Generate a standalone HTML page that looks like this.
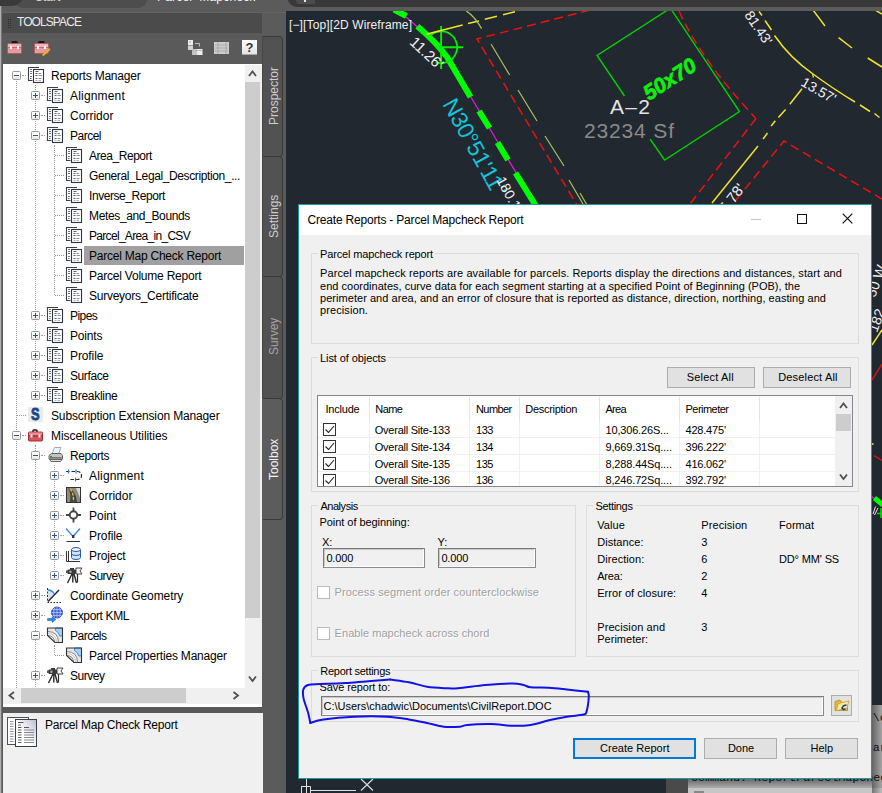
<!DOCTYPE html>
<html lang="en"><head><meta charset="utf-8"><title>Create Reports - Parcel Mapcheck Report</title>
<style>

html,body{margin:0;padding:0;}
body{width:882px;height:793px;overflow:hidden;background:#595959;font-family:"Liberation Sans",sans-serif;}
#root{position:relative;width:882px;height:793px;overflow:hidden;background:#595959;}
.a{position:absolute;}
.tx{position:absolute;white-space:nowrap;transform:translateY(-50%);line-height:1;}
.tr{font-size:12px;color:#000;}
.dl{font-size:11px;color:#000;}
.dis{color:#a0a0a0;}
.vd{position:absolute;width:0;border-left:1px dotted #9a9a9a;}
.hd{position:absolute;height:0;border-top:1px dotted #9a9a9a;}
.ex{position:absolute;width:7px;height:7px;border:1px solid #989898;border-radius:1.5px;background:linear-gradient(#fff 40%,#e4e4e4);}
.ex i{position:absolute;left:1px;top:3px;width:5px;height:1px;background:#33508e;}
.ex b{position:absolute;left:3px;top:1px;width:1px;height:5px;background:#33508e;}
.gb{position:absolute;border:1px solid #dcdcdc;box-sizing:border-box;}
.lg{background:#f0f0f0;padding:0 2px;}
.btn{position:absolute;box-sizing:border-box;border:1px solid #adadad;background:#e1e1e1;font-size:11px;color:#000;text-align:center;}
.cb{position:absolute;width:11px;height:11px;border:1px solid #333;background:#fff;}
.vt{position:absolute;font-size:12px;color:#d8d8d8;white-space:nowrap;transform-origin:0 0;transform:rotate(-90deg);line-height:1;}

</style></head>
<body>
<div id="root">
<div class="a" style="left:0;top:0;width:1px;height:793px;background:#b0b0b0"></div>
<div class="a" style="left:1px;top:0;width:1px;height:793px;background:#1e98a0"></div>
<div class="a" style="left:2px;top:0;width:880px;height:13px;background:#5b5b5b"></div>
<div class="a" style="left:2px;top:12px;width:284px;height:1px;background:#636363"></div>
<div class="a" style="left:14px;top:-20px;width:133px;height:28px;background:#4d4d4d;border-radius:0 0 9px 9px"></div>
<div class="a" style="left:-20px;top:-20px;width:43px;height:26px;background:#3a3a3a;border-radius:0 0 11px 0"></div>
<div class="a" style="left:287px;top:-20px;width:620px;height:27px;background:#393939;border-radius:0 0 0 11px"></div>
<div class="a" style="left:296px;top:-10px;width:19px;height:13.500px;background:#4c4c4c;border-radius:0 0 0 4px"></div>
<div class="a" style="left:304px;top:0;width:2px;height:1.500px;background:#e8e8e8"></div>
<span class="a" style="left:35px;top:-9px;font-size:12px;color:#d8d8d8;line-height:1">Start</span>
<span class="a" style="left:157px;top:-9px;font-size:12px;color:#f4f4f4;line-height:1;letter-spacing:.2px">Parcel&nbsp; Mapcheck*</span>
<div class="a" style="left:2px;top:13px;width:261px;height:20px;background:#4b4b4b;border-radius:3px 3px 0 0"></div>
<div class="a" style="left:8px;top:19px;width:1px;height:9px;border-left:1px dotted #2c2c2c"></div>
<div class="a" style="left:10px;top:19px;width:1px;height:9px;border-left:1px dotted #2c2c2c"></div>
<span id="t1" class="tx tr" style="left:17px;top:21.5px;letter-spacing:-0.917px;color:#eaeaea;font-size:12px">TOOLSPACE</span>
<div class="a" style="left:2px;top:34px;width:259px;height:30px;background:#5a5a5a;border-radius:3px 3px 0 0"></div>
<svg class="a" style="left:6px;top:40px" width="18" height="16" viewBox="0 0 18 16"><path d="M6 4 V3 Q6 2 7 2 H10 Q11 2 11 3 V4" fill="none" stroke="#161616" stroke-width="1.800"/><rect x="1.5" y="3.5" width="14" height="10" rx="1" fill="#e79aa0" stroke="#b55a63"/><rect x="2" y="4" width="13" height="3" fill="#f0b4b8"/><rect x="2" y="7" width="13" height="1" fill="#c46a72"/><rect x="4" y="6" width="2" height="3" fill="#f4f4f4"/><rect x="11" y="6" width="2" height="3" fill="#f4f4f4"/></svg>
<svg class="a" style="left:33px;top:40px" width="18" height="16" viewBox="0 0 18 16"><path d="M6 4 V3 Q6 2 7 2 H10 Q11 2 11 3 V4" fill="none" stroke="#161616" stroke-width="1.800"/><rect x="1.5" y="3.5" width="14" height="10" rx="1" fill="#e79aa0" stroke="#b55a63"/><rect x="2" y="4" width="13" height="3" fill="#f0b4b8"/><rect x="2" y="7" width="13" height="1" fill="#c46a72"/><rect x="4" y="6" width="2" height="3" fill="#f4f4f4"/><rect x="11" y="6" width="2" height="3" fill="#f4f4f4"/><path d="M9 15 L15 9 L16.5 10.5 L10.5 16 Z" fill="#f2c21a" stroke="#b8860b" stroke-width=".5"/><path d="M15 9 L16 8 L17.5 9.5 L16.5 10.5Z" fill="#e8a090"/></svg>
<svg class="a" style="left:187px;top:40px" width="17" height="16" viewBox="0 0 17 16"><rect x="1" y="0" width="5" height="5" fill="#ececec"/><rect x="2" y="1" width="2" height="2" fill="#c8c8c8"/><rect x="1" y="5.500" width="5" height="4.500" fill="#d2d2d2"/><rect x="5" y="9" width="5" height="6" fill="#c4c4c4"/><rect x="10" y="9" width="5.500" height="6" fill="#ececec"/><path d="M5 10.500H15" stroke="#b0b0b0" stroke-width=".8"/><path d="M8 3.500H12.500V6.500" fill="none" stroke="#c0c0c0" stroke-width="1"/></svg>
<svg class="a" style="left:213px;top:41px" width="18" height="14" viewBox="0 0 18 14"><rect x="1" y="1" width="15" height="12" fill="#cdcdcd"/><path d="M2 4H15M2 7H15M2 10H15M5 1V13M13 1V13" stroke="#aaa" stroke-width="1"/></svg>
<div class="a" style="left:242px;top:40px;width:15px;height:14px;background:linear-gradient(#fff,#e4e4e4);border-bottom:1px solid #aaa;color:#333;font-size:13px;font-weight:bold;text-align:center;line-height:15px">?</div>
<div class="a" style="left:3px;top:64px;width:259px;height:643px;background:#fff"></div>
<div class="a" style="left:245px;top:65px;width:17px;height:639px;background:#f0f0f0"></div>
<div class="a" style="left:245px;top:82px;width:15px;height:536px;background:#cdcdcd"></div>
<svg class="a" style="left:248px;top:70px" width="9" height="8"><path d="M1 6 L4.5 1.5 L8 6" fill="none" stroke="#505050" stroke-width="1.800"/></svg>
<svg class="a" style="left:248px;top:675px" width="9" height="8"><path d="M1 1.5 L4.5 6 L8 1.5" fill="none" stroke="#505050" stroke-width="1.800"/></svg>
<div class="a" style="left:3px;top:688px;width:259px;height:16px;background:#f0f0f0"></div>
<div class="a" style="left:21px;top:688px;width:165px;height:15px;background:#cdcdcd"></div>
<svg class="a" style="left:8px;top:691px" width="8" height="9"><path d="M6 1 L1.5 4.5 L6 8" fill="none" stroke="#505050" stroke-width="1.800"/></svg>
<svg class="a" style="left:232px;top:691px" width="8" height="9"><path d="M1.5 1 L6 4.5 L1.5 8" fill="none" stroke="#505050" stroke-width="1.800"/></svg>
<div class="a" style="left:2px;top:706.500px;width:261px;height:6.500px;background:#585858"></div>
<div class="a" style="left:3px;top:712.500px;width:260px;height:81px;background:#f0f0f0"></div>
<div class="vd" style="left:16px;top:81px;height:607px"></div>
<div class="vd" style="left:35px;top:85px;height:305px"></div>
<div class="vd" style="left:54px;top:145px;height:150px"></div>
<div class="vd" style="left:35px;top:445px;height:242px"></div>
<div class="vd" style="left:54px;top:465px;height:105px"></div>
<div class="vd" style="left:54px;top:645px;height:10px"></div>
<div class="a" style="left:84px;top:246px;width:160px;height:19px;background:#a0a0a0"></div>
<div class="hd" style="left:22px;top:75px;width:4px"></div>
<div class="ex" style="left:12px;top:71px"><i></i></div>
<svg class="a" style="left:27px;top:66px" width="18" height="18" viewBox="0 0 18 18"><path d="M6 1H1V15H6V17H17V3H12V1Z" fill="#fff"/><path d="M12 1.500H1.500V14.500H5.500" fill="none" stroke="#3a3f4c" stroke-width="1.100"/><path d="M3 3.500H5M3 5.500H5M3 7.500H5M3 10.500H5M3 12.500H4.500" stroke="#70747e"/><rect x="6.500" y="3.500" width="10" height="13" fill="#fff" stroke="#2e3340" stroke-width="1.100"/><path d="M8.500 5.500H11.500M8.500 7.500H10.500M8.500 9.500H10.500M8.500 12.500H10.500" stroke="#60646e"/><path d="M11.500 7.500H14M11.500 9.500H15M11.500 12.500H14.500" stroke="#8a8e98"/><path d="M8.500 14.500H10.500M11.500 14.500H14" stroke="#b0b3ba"/></svg>
<span id="t2" class="tx tr" style="left:51px;top:75.5px;letter-spacing:-0.215px;">Reports Manager</span>
<div class="hd" style="left:41px;top:95px;width:4px"></div>
<div class="ex" style="left:31px;top:91px"><i></i><b></b></div>
<svg class="a" style="left:46px;top:86px" width="18" height="18" viewBox="0 0 18 18"><path d="M6 1H1V15H6V17H17V3H12V1Z" fill="#fff"/><path d="M12 1.500H1.500V14.500H5.500" fill="none" stroke="#3a3f4c" stroke-width="1.100"/><path d="M3 3.500H5M3 5.500H5M3 7.500H5M3 10.500H5M3 12.500H4.500" stroke="#70747e"/><rect x="6.500" y="3.500" width="10" height="13" fill="#fff" stroke="#2e3340" stroke-width="1.100"/><path d="M8.500 5.500H11.500M8.500 7.500H10.500M8.500 9.500H10.500M8.500 12.500H10.500" stroke="#60646e"/><path d="M11.500 7.500H14M11.500 9.500H15M11.500 12.500H14.500" stroke="#8a8e98"/><path d="M8.500 14.500H10.500M11.500 14.500H14" stroke="#b0b3ba"/></svg>
<span id="t3" class="tx tr" style="left:70px;top:95.5px;letter-spacing:0.181px;">Alignment</span>
<div class="hd" style="left:41px;top:115px;width:4px"></div>
<div class="ex" style="left:31px;top:111px"><i></i><b></b></div>
<svg class="a" style="left:46px;top:106px" width="18" height="18" viewBox="0 0 18 18"><path d="M6 1H1V15H6V17H17V3H12V1Z" fill="#fff"/><path d="M12 1.500H1.500V14.500H5.500" fill="none" stroke="#3a3f4c" stroke-width="1.100"/><path d="M3 3.500H5M3 5.500H5M3 7.500H5M3 10.500H5M3 12.500H4.500" stroke="#70747e"/><rect x="6.500" y="3.500" width="10" height="13" fill="#fff" stroke="#2e3340" stroke-width="1.100"/><path d="M8.500 5.500H11.500M8.500 7.500H10.500M8.500 9.500H10.500M8.500 12.500H10.500" stroke="#60646e"/><path d="M11.500 7.500H14M11.500 9.500H15M11.500 12.500H14.500" stroke="#8a8e98"/><path d="M8.500 14.500H10.500M11.500 14.500H14" stroke="#b0b3ba"/></svg>
<span id="t4" class="tx tr" style="left:70px;top:115.5px;letter-spacing:0.020px;">Corridor</span>
<div class="hd" style="left:41px;top:135px;width:4px"></div>
<div class="ex" style="left:31px;top:131px"><i></i></div>
<svg class="a" style="left:46px;top:126px" width="18" height="18" viewBox="0 0 18 18"><path d="M6 1H1V15H6V17H17V3H12V1Z" fill="#fff"/><path d="M12 1.500H1.500V14.500H5.500" fill="none" stroke="#3a3f4c" stroke-width="1.100"/><path d="M3 3.500H5M3 5.500H5M3 7.500H5M3 10.500H5M3 12.500H4.500" stroke="#70747e"/><rect x="6.500" y="3.500" width="10" height="13" fill="#fff" stroke="#2e3340" stroke-width="1.100"/><path d="M8.500 5.500H11.500M8.500 7.500H10.500M8.500 9.500H10.500M8.500 12.500H10.500" stroke="#60646e"/><path d="M11.500 7.500H14M11.500 9.500H15M11.500 12.500H14.500" stroke="#8a8e98"/><path d="M8.500 14.500H10.500M11.500 14.500H14" stroke="#b0b3ba"/></svg>
<span id="t5" class="tx tr" style="left:70px;top:135.5px;letter-spacing:-0.503px;">Parcel</span>
<div class="hd" style="left:55px;top:155px;width:9px"></div>
<svg class="a" style="left:65px;top:146px" width="18" height="18" viewBox="0 0 18 18"><path d="M6 1H1V15H6V17H17V3H12V1Z" fill="#fff"/><path d="M12 1.500H1.500V14.500H5.500" fill="none" stroke="#3a3f4c" stroke-width="1.100"/><path d="M3 3.500H5M3 5.500H5M3 7.500H5M3 10.500H5M3 12.500H4.500" stroke="#70747e"/><rect x="6.500" y="3.500" width="10" height="13" fill="#fff" stroke="#2e3340" stroke-width="1.100"/><path d="M8.500 5.500H11.500M8.500 7.500H10.500M8.500 9.500H10.500M8.500 12.500H10.500" stroke="#60646e"/><path d="M11.500 7.500H14M11.500 9.500H15M11.500 12.500H14.500" stroke="#8a8e98"/><path d="M8.500 14.500H10.500M11.500 14.500H14" stroke="#b0b3ba"/></svg>
<span id="t6" class="tx tr" style="left:89px;top:155.5px;letter-spacing:-0.459px;">Area_Report</span>
<div class="hd" style="left:55px;top:175px;width:9px"></div>
<svg class="a" style="left:65px;top:166px" width="18" height="18" viewBox="0 0 18 18"><path d="M6 1H1V15H6V17H17V3H12V1Z" fill="#fff"/><path d="M12 1.500H1.500V14.500H5.500" fill="none" stroke="#3a3f4c" stroke-width="1.100"/><path d="M3 3.500H5M3 5.500H5M3 7.500H5M3 10.500H5M3 12.500H4.500" stroke="#70747e"/><rect x="6.500" y="3.500" width="10" height="13" fill="#fff" stroke="#2e3340" stroke-width="1.100"/><path d="M8.500 5.500H11.500M8.500 7.500H10.500M8.500 9.500H10.500M8.500 12.500H10.500" stroke="#60646e"/><path d="M11.500 7.500H14M11.500 9.500H15M11.500 12.500H14.500" stroke="#8a8e98"/><path d="M8.500 14.500H10.500M11.500 14.500H14" stroke="#b0b3ba"/></svg>
<span id="t7" class="tx tr" style="left:89px;top:175.5px;letter-spacing:-0.383px;">General_Legal_Description_...</span>
<div class="hd" style="left:55px;top:195px;width:9px"></div>
<svg class="a" style="left:65px;top:186px" width="18" height="18" viewBox="0 0 18 18"><path d="M6 1H1V15H6V17H17V3H12V1Z" fill="#fff"/><path d="M12 1.500H1.500V14.500H5.500" fill="none" stroke="#3a3f4c" stroke-width="1.100"/><path d="M3 3.500H5M3 5.500H5M3 7.500H5M3 10.500H5M3 12.500H4.500" stroke="#70747e"/><rect x="6.500" y="3.500" width="10" height="13" fill="#fff" stroke="#2e3340" stroke-width="1.100"/><path d="M8.500 5.500H11.500M8.500 7.500H10.500M8.500 9.500H10.500M8.500 12.500H10.500" stroke="#60646e"/><path d="M11.500 7.500H14M11.500 9.500H15M11.500 12.500H14.500" stroke="#8a8e98"/><path d="M8.500 14.500H10.500M11.500 14.500H14" stroke="#b0b3ba"/></svg>
<span id="t8" class="tx tr" style="left:89px;top:195.5px;letter-spacing:-0.432px;">Inverse_Report</span>
<div class="hd" style="left:55px;top:215px;width:9px"></div>
<svg class="a" style="left:65px;top:206px" width="18" height="18" viewBox="0 0 18 18"><path d="M6 1H1V15H6V17H17V3H12V1Z" fill="#fff"/><path d="M12 1.500H1.500V14.500H5.500" fill="none" stroke="#3a3f4c" stroke-width="1.100"/><path d="M3 3.500H5M3 5.500H5M3 7.500H5M3 10.500H5M3 12.500H4.500" stroke="#70747e"/><rect x="6.500" y="3.500" width="10" height="13" fill="#fff" stroke="#2e3340" stroke-width="1.100"/><path d="M8.500 5.500H11.500M8.500 7.500H10.500M8.500 9.500H10.500M8.500 12.500H10.500" stroke="#60646e"/><path d="M11.500 7.500H14M11.500 9.500H15M11.500 12.500H14.500" stroke="#8a8e98"/><path d="M8.500 14.500H10.500M11.500 14.500H14" stroke="#b0b3ba"/></svg>
<span id="t9" class="tx tr" style="left:89px;top:215.5px;letter-spacing:-0.359px;">Metes_and_Bounds</span>
<div class="hd" style="left:55px;top:235px;width:9px"></div>
<svg class="a" style="left:65px;top:226px" width="18" height="18" viewBox="0 0 18 18"><path d="M6 1H1V15H6V17H17V3H12V1Z" fill="#fff"/><path d="M12 1.500H1.500V14.500H5.500" fill="none" stroke="#3a3f4c" stroke-width="1.100"/><path d="M3 3.500H5M3 5.500H5M3 7.500H5M3 10.500H5M3 12.500H4.500" stroke="#70747e"/><rect x="6.500" y="3.500" width="10" height="13" fill="#fff" stroke="#2e3340" stroke-width="1.100"/><path d="M8.500 5.500H11.500M8.500 7.500H10.500M8.500 9.500H10.500M8.500 12.500H10.500" stroke="#60646e"/><path d="M11.500 7.500H14M11.500 9.500H15M11.500 12.500H14.500" stroke="#8a8e98"/><path d="M8.500 14.500H10.500M11.500 14.500H14" stroke="#b0b3ba"/></svg>
<span id="t10" class="tx tr" style="left:89px;top:235.5px;letter-spacing:-0.689px;">Parcel_Area_in_CSV</span>
<div class="hd" style="left:55px;top:255px;width:9px"></div>
<svg class="a" style="left:65px;top:246px" width="18" height="18" viewBox="0 0 18 18"><path d="M6 1H1V15H6V17H17V3H12V1Z" fill="#fff"/><path d="M12 1.500H1.500V14.500H5.500" fill="none" stroke="#3a3f4c" stroke-width="1.100"/><path d="M3 3.500H5M3 5.500H5M3 7.500H5M3 10.500H5M3 12.500H4.500" stroke="#70747e"/><rect x="6.500" y="3.500" width="10" height="13" fill="#fff" stroke="#2e3340" stroke-width="1.100"/><path d="M8.500 5.500H11.500M8.500 7.500H10.500M8.500 9.500H10.500M8.500 12.500H10.500" stroke="#60646e"/><path d="M11.500 7.500H14M11.500 9.500H15M11.500 12.500H14.500" stroke="#8a8e98"/><path d="M8.500 14.500H10.500M11.500 14.500H14" stroke="#b0b3ba"/></svg>
<span id="t11" class="tx tr" style="left:89px;top:255.5px;letter-spacing:-0.234px;">Parcel Map Check Report</span>
<div class="hd" style="left:55px;top:275px;width:9px"></div>
<svg class="a" style="left:65px;top:266px" width="18" height="18" viewBox="0 0 18 18"><path d="M6 1H1V15H6V17H17V3H12V1Z" fill="#fff"/><path d="M12 1.500H1.500V14.500H5.500" fill="none" stroke="#3a3f4c" stroke-width="1.100"/><path d="M3 3.500H5M3 5.500H5M3 7.500H5M3 10.500H5M3 12.500H4.500" stroke="#70747e"/><rect x="6.500" y="3.500" width="10" height="13" fill="#fff" stroke="#2e3340" stroke-width="1.100"/><path d="M8.500 5.500H11.500M8.500 7.500H10.500M8.500 9.500H10.500M8.500 12.500H10.500" stroke="#60646e"/><path d="M11.500 7.500H14M11.500 9.500H15M11.500 12.500H14.500" stroke="#8a8e98"/><path d="M8.500 14.500H10.500M11.500 14.500H14" stroke="#b0b3ba"/></svg>
<span id="t12" class="tx tr" style="left:89px;top:275.5px;letter-spacing:-0.217px;">Parcel Volume Report</span>
<div class="hd" style="left:55px;top:295px;width:9px"></div>
<svg class="a" style="left:65px;top:286px" width="18" height="18" viewBox="0 0 18 18"><path d="M6 1H1V15H6V17H17V3H12V1Z" fill="#fff"/><path d="M12 1.500H1.500V14.500H5.500" fill="none" stroke="#3a3f4c" stroke-width="1.100"/><path d="M3 3.500H5M3 5.500H5M3 7.500H5M3 10.500H5M3 12.500H4.500" stroke="#70747e"/><rect x="6.500" y="3.500" width="10" height="13" fill="#fff" stroke="#2e3340" stroke-width="1.100"/><path d="M8.500 5.500H11.500M8.500 7.500H10.500M8.500 9.500H10.500M8.500 12.500H10.500" stroke="#60646e"/><path d="M11.500 7.500H14M11.500 9.500H15M11.500 12.500H14.500" stroke="#8a8e98"/><path d="M8.500 14.500H10.500M11.500 14.500H14" stroke="#b0b3ba"/></svg>
<span id="t13" class="tx tr" style="left:89px;top:295.5px;letter-spacing:-0.258px;">Surveyors_Certificate</span>
<div class="hd" style="left:41px;top:315px;width:4px"></div>
<div class="ex" style="left:31px;top:311px"><i></i><b></b></div>
<svg class="a" style="left:46px;top:306px" width="18" height="18" viewBox="0 0 18 18"><path d="M6 1H1V15H6V17H17V3H12V1Z" fill="#fff"/><path d="M12 1.500H1.500V14.500H5.500" fill="none" stroke="#3a3f4c" stroke-width="1.100"/><path d="M3 3.500H5M3 5.500H5M3 7.500H5M3 10.500H5M3 12.500H4.500" stroke="#70747e"/><rect x="6.500" y="3.500" width="10" height="13" fill="#fff" stroke="#2e3340" stroke-width="1.100"/><path d="M8.500 5.500H11.500M8.500 7.500H10.500M8.500 9.500H10.500M8.500 12.500H10.500" stroke="#60646e"/><path d="M11.500 7.500H14M11.500 9.500H15M11.500 12.500H14.500" stroke="#8a8e98"/><path d="M8.500 14.500H10.500M11.500 14.500H14" stroke="#b0b3ba"/></svg>
<span id="t14" class="tx tr" style="left:70px;top:315.5px;letter-spacing:-0.566px;">Pipes</span>
<div class="hd" style="left:41px;top:335px;width:4px"></div>
<div class="ex" style="left:31px;top:331px"><i></i><b></b></div>
<svg class="a" style="left:46px;top:326px" width="18" height="18" viewBox="0 0 18 18"><path d="M6 1H1V15H6V17H17V3H12V1Z" fill="#fff"/><path d="M12 1.500H1.500V14.500H5.500" fill="none" stroke="#3a3f4c" stroke-width="1.100"/><path d="M3 3.500H5M3 5.500H5M3 7.500H5M3 10.500H5M3 12.500H4.500" stroke="#70747e"/><rect x="6.500" y="3.500" width="10" height="13" fill="#fff" stroke="#2e3340" stroke-width="1.100"/><path d="M8.500 5.500H11.500M8.500 7.500H10.500M8.500 9.500H10.500M8.500 12.500H10.500" stroke="#60646e"/><path d="M11.500 7.500H14M11.500 9.500H15M11.500 12.500H14.500" stroke="#8a8e98"/><path d="M8.500 14.500H10.500M11.500 14.500H14" stroke="#b0b3ba"/></svg>
<span id="t15" class="tx tr" style="left:70px;top:335.5px;letter-spacing:-0.177px;">Points</span>
<div class="hd" style="left:41px;top:355px;width:4px"></div>
<div class="ex" style="left:31px;top:351px"><i></i><b></b></div>
<svg class="a" style="left:46px;top:346px" width="18" height="18" viewBox="0 0 18 18"><path d="M6 1H1V15H6V17H17V3H12V1Z" fill="#fff"/><path d="M12 1.500H1.500V14.500H5.500" fill="none" stroke="#3a3f4c" stroke-width="1.100"/><path d="M3 3.500H5M3 5.500H5M3 7.500H5M3 10.500H5M3 12.500H4.500" stroke="#70747e"/><rect x="6.500" y="3.500" width="10" height="13" fill="#fff" stroke="#2e3340" stroke-width="1.100"/><path d="M8.500 5.500H11.500M8.500 7.500H10.500M8.500 9.500H10.500M8.500 12.500H10.500" stroke="#60646e"/><path d="M11.500 7.500H14M11.500 9.500H15M11.500 12.500H14.500" stroke="#8a8e98"/><path d="M8.500 14.500H10.500M11.500 14.500H14" stroke="#b0b3ba"/></svg>
<span id="t16" class="tx tr" style="left:70px;top:355.5px;letter-spacing:-0.102px;">Profile</span>
<div class="hd" style="left:41px;top:375px;width:4px"></div>
<div class="ex" style="left:31px;top:371px"><i></i><b></b></div>
<svg class="a" style="left:46px;top:366px" width="18" height="18" viewBox="0 0 18 18"><path d="M6 1H1V15H6V17H17V3H12V1Z" fill="#fff"/><path d="M12 1.500H1.500V14.500H5.500" fill="none" stroke="#3a3f4c" stroke-width="1.100"/><path d="M3 3.500H5M3 5.500H5M3 7.500H5M3 10.500H5M3 12.500H4.500" stroke="#70747e"/><rect x="6.500" y="3.500" width="10" height="13" fill="#fff" stroke="#2e3340" stroke-width="1.100"/><path d="M8.500 5.500H11.500M8.500 7.500H10.500M8.500 9.500H10.500M8.500 12.500H10.500" stroke="#60646e"/><path d="M11.500 7.500H14M11.500 9.500H15M11.500 12.500H14.500" stroke="#8a8e98"/><path d="M8.500 14.500H10.500M11.500 14.500H14" stroke="#b0b3ba"/></svg>
<span id="t17" class="tx tr" style="left:70px;top:375.5px;letter-spacing:-0.408px;">Surface</span>
<div class="hd" style="left:41px;top:395px;width:4px"></div>
<div class="ex" style="left:31px;top:391px"><i></i><b></b></div>
<svg class="a" style="left:46px;top:386px" width="18" height="18" viewBox="0 0 18 18"><path d="M6 1H1V15H6V17H17V3H12V1Z" fill="#fff"/><path d="M12 1.500H1.500V14.500H5.500" fill="none" stroke="#3a3f4c" stroke-width="1.100"/><path d="M3 3.500H5M3 5.500H5M3 7.500H5M3 10.500H5M3 12.500H4.500" stroke="#70747e"/><rect x="6.500" y="3.500" width="10" height="13" fill="#fff" stroke="#2e3340" stroke-width="1.100"/><path d="M8.500 5.500H11.500M8.500 7.500H10.500M8.500 9.500H10.500M8.500 12.500H10.500" stroke="#60646e"/><path d="M11.500 7.500H14M11.500 9.500H15M11.500 12.500H14.500" stroke="#8a8e98"/><path d="M8.500 14.500H10.500M11.500 14.500H14" stroke="#b0b3ba"/></svg>
<span id="t18" class="tx tr" style="left:70px;top:395.5px;letter-spacing:-0.281px;">Breakline</span>
<div class="hd" style="left:17px;top:415px;width:9px"></div>
<div class="a" style="left:28px;top:407px;width:15px;height:15px;background:#ebebeb"></div><span class="a" style="left:31.3px;top:406.5px;font-size:16px;font-weight:bold;color:#174a8c;line-height:1;-webkit-text-stroke:.9px #174a8c;transform:scaleX(.8);transform-origin:0 0">S</span>
<span id="t19" class="tx tr" style="left:51px;top:415.5px;letter-spacing:-0.142px;">Subscription Extension Manager</span>
<div class="hd" style="left:22px;top:435px;width:4px"></div>
<div class="ex" style="left:12px;top:431px"><i></i></div>
<svg class="a" style="left:27px;top:426px" width="18" height="18" viewBox="0 0 18 18"><path d="M6 6V4.800Q6 4 6.800 4H9.200Q10 4 10 4.800V6" fill="none" stroke="#1a1a1a" stroke-width="1.500"/><rect x="1.500" y="6" width="14" height="9" rx="1" fill="#d8545c" stroke="#9c3038"/><rect x="2" y="6.500" width="13" height="2.500" fill="#ec8c92"/><rect x="2" y="9.500" width="13" height="1" fill="#8a2a32"/><rect x="3.500" y="8.500" width="2" height="3" fill="#eee"/><rect x="11.500" y="8.500" width="2" height="3" fill="#eee"/></svg>
<span id="t20" class="tx tr" style="left:51px;top:435.5px;letter-spacing:-0.067px;">Miscellaneous Utilities</span>
<div class="hd" style="left:41px;top:455px;width:4px"></div>
<div class="ex" style="left:31px;top:451px"><i></i></div>
<svg class="a" style="left:47px;top:446px" width="18" height="18" viewBox="0 0 18 18"><path d="M7.500 1.500H14L11.500 8H5Z" fill="#e8f2fc" stroke="#8a9aaa" stroke-width=".8"/><path d="M2 9.500L4.500 7.500H14L15.500 9.500V13H2Z" fill="#c4c4c4" stroke="#555" stroke-width=".9"/><path d="M2.500 13.500H15L13.500 15.500H4Z" fill="#e4e4e4" stroke="#555" stroke-width=".9"/><path d="M3 11.500H14.500" stroke="#777"/><rect x="3" y="10" width="2" height="1" fill="#3a9a3a"/></svg>
<span id="t21" class="tx tr" style="left:70px;top:455.5px;letter-spacing:-0.433px;">Reports</span>
<div class="hd" style="left:60px;top:475px;width:4px"></div>
<div class="ex" style="left:50px;top:471px"><i></i><b></b></div>
<svg class="a" style="left:65px;top:466px" width="18" height="18" viewBox="0 0 18 18"><path d="M1 5.500H12Q16.500 5.500 16.500 9.500Q16.500 13.500 12 13.500H5" fill="none" stroke="#2a2a2a" stroke-width="1.200" stroke-dasharray="3.500 2"/><path d="M3.500 3.500V7.500M11 3.500V7.500M10.500 11.500V15.500" stroke="#2a7ad8" stroke-width="1.200"/></svg>
<span id="t22" class="tx tr" style="left:89px;top:475.5px;letter-spacing:0.181px;">Alignment</span>
<div class="hd" style="left:60px;top:495px;width:4px"></div>
<div class="ex" style="left:50px;top:491px"><i></i><b></b></div>
<svg class="a" style="left:65px;top:486px" width="18" height="18" viewBox="0 0 18 18"><rect x="1.5" y="1.5" width="14" height="15" fill="#8a8a80" stroke="#333"/><path d="M3 2C9 4 11 9 12 16H5C6 10 5 5 3 2Z" fill="#444"/><path d="M5 3C8 6 8.5 10 8.5 16" fill="none" stroke="#f2c81a" stroke-width="1.3" stroke-dasharray="3 1.5"/><path d="M11 2L15 2L15 12Z" fill="#d8d8d0"/></svg>
<span id="t23" class="tx tr" style="left:89px;top:495.5px;letter-spacing:0.020px;">Corridor</span>
<div class="hd" style="left:60px;top:515px;width:4px"></div>
<div class="ex" style="left:50px;top:511px"><i></i><b></b></div>
<svg class="a" style="left:65px;top:506px" width="18" height="18" viewBox="0 0 18 18"><circle cx="8.500" cy="9" r="3.700" fill="none" stroke="#444" stroke-width="1.900"/><path d="M8.500 1.500V5.500M8.500 12.500V16.500M1 9H5M12 9H16" stroke="#444" stroke-width="1.800"/></svg>
<span id="t24" class="tx tr" style="left:89px;top:515.5px;letter-spacing:-0.012px;">Point</span>
<div class="hd" style="left:60px;top:535px;width:4px"></div>
<div class="ex" style="left:50px;top:531px"><i></i><b></b></div>
<svg class="a" style="left:65px;top:526px" width="18" height="18" viewBox="0 0 18 18"><path d="M1 2.5L8 10.5L15 2.5" fill="none" stroke="#3a8ae0" stroke-width="1.3"/><rect x="7" y="9" width="2.4" height="3" fill="#333"/><path d="M1.5 15.5H15" stroke="#333"/></svg>
<span id="t25" class="tx tr" style="left:89px;top:535.5px;letter-spacing:-0.088px;">Profile</span>
<div class="hd" style="left:60px;top:555px;width:4px"></div>
<div class="ex" style="left:50px;top:551px"><i></i><b></b></div>
<svg class="a" style="left:65px;top:546px" width="18" height="18" viewBox="0 0 18 18"><path d="M1.5 5V15.5H4M3.5 5V15.5" fill="none" stroke="#333"/><path d="M4 15.5H15" stroke="#333"/><path d="M6.500 3.500V11.500Q6.500 13.500 11 13.500Q15.500 13.500 15.500 11.500V3.500" fill="#cfe4fb" stroke="#2a5aa8"/><ellipse cx="11" cy="3.500" rx="4.500" ry="2" fill="#eaf3ff" stroke="#2a5aa8"/><path d="M6.500 7.500Q6.500 9.500 11 9.500Q15.500 9.500 15.500 7.500" fill="none" stroke="#2a5aa8"/></svg>
<span id="t26" class="tx tr" style="left:89px;top:555.5px;letter-spacing:-0.123px;">Project</span>
<div class="hd" style="left:60px;top:575px;width:4px"></div>
<div class="ex" style="left:50px;top:571px"><i></i><b></b></div>
<svg class="a" style="left:65px;top:566px" width="18" height="18" viewBox="0 0 18 18"><path d="M7 8L2.500 17M7.800 8V16.500M9 8L11.500 17" stroke="#2a2a2a" stroke-width="1.400" fill="none"/><path d="M12.500 3V16.500" stroke="#2a2a2a" stroke-width="1.200"/><rect x="2.500" y="3.500" width="8.500" height="4.500" rx=".8" fill="#3a3a3a"/><rect x="1" y="4.500" width="2" height="2.500" fill="#555"/><rect x="5" y="2" width="4" height="2" fill="#3a3a3a"/><path d="M11 2H17L15 5L17 8H11Z" fill="#f4f4f4" stroke="#333" stroke-width=".9"/><circle cx="5.500" cy="5.700" r="1.200" fill="#aaa"/></svg>
<span id="t27" class="tx tr" style="left:89px;top:575.5px;letter-spacing:-0.543px;">Survey</span>
<div class="hd" style="left:41px;top:595px;width:4px"></div>
<div class="ex" style="left:31px;top:591px"><i></i><b></b></div>
<svg class="a" style="left:46px;top:586px" width="18" height="18" viewBox="0 0 18 18"><path d="M1.500 15.500V3L8 7.500Z" fill="#d8e2ec"/><path d="M2 15.500L13 4" stroke="#2a2a2a" stroke-width="1.500"/><path d="M1.500 2V16" fill="none" stroke="#333" stroke-dasharray="2 1.500"/><path d="M1.500 16.500H16" fill="none" stroke="#333" stroke-dasharray="1.500 1.500"/><path d="M2 4Q6 4 8.500 8" fill="none" stroke="#2a8ae8" stroke-width="1.300"/></svg>
<span id="t28" class="tx tr" style="left:70px;top:595.5px;letter-spacing:-0.075px;">Coordinate Geometry</span>
<div class="hd" style="left:41px;top:615px;width:4px"></div>
<div class="ex" style="left:31px;top:611px"><i></i><b></b></div>
<svg class="a" style="left:46px;top:606px" width="18" height="18" viewBox="0 0 18 18"><circle cx="11" cy="6.500" r="5.500" fill="#3f60d8" stroke="#2238a8" stroke-width=".8"/><path d="M5.500 6.500H16.500M6.500 3.500H15.500M6.500 9.500H15.500M11 1V12M8.500 1.800Q6.500 6.500 8.500 11.200M13.500 1.800Q15.500 6.500 13.500 11.200" fill="none" stroke="#b4c8ff" stroke-width=".8"/><path d="M1.500 12.500H6V10.500L10 13.500L6 16.500V14.500H1.500Z" fill="#2a86e0" stroke="#1a5ab0" stroke-width=".5"/></svg>
<span id="t29" class="tx tr" style="left:70px;top:615.5px;letter-spacing:-0.350px;">Export KML</span>
<div class="hd" style="left:41px;top:635px;width:4px"></div>
<div class="ex" style="left:31px;top:631px"><i></i></div>
<svg class="a" style="left:46px;top:626px" width="18" height="18" viewBox="0 0 18 18"><path d="M1.500 2H16.500V16.500H9L1.500 9.500Z" fill="#e6e6e6"/><path d="M1.500 5.500Q12.500 5.500 12.500 16.500H8.500Q8.500 9.500 1.500 9.500Z" fill="#fafafa" stroke="#777" stroke-width=".9"/><path d="M1.500 7.500Q10.500 7.500 10.500 16.500" fill="none" stroke="#aaa" stroke-width=".7"/><path d="M9.500 2H16.500V10H13.800Q12.500 5.500 9.500 4.500Z" fill="#a6d2f0" stroke="#2a8ad8" stroke-width=".9"/><path d="M1.500 2H16.500V16.500H9L1.500 9.500Z" fill="none" stroke="#333" stroke-width="1.100"/></svg>
<span id="t30" class="tx tr" style="left:70px;top:635.5px;letter-spacing:-0.502px;">Parcels</span>
<div class="hd" style="left:55px;top:655px;width:9px"></div>
<svg class="a" style="left:65px;top:646px" width="18" height="18" viewBox="0 0 18 18"><path d="M1.500 2H16.500V16.500H9L1.500 9.500Z" fill="#e6e6e6"/><path d="M1.500 5.500Q12.500 5.500 12.500 16.500H8.500Q8.500 9.500 1.500 9.500Z" fill="#fafafa" stroke="#777" stroke-width=".9"/><path d="M1.500 7.500Q10.500 7.500 10.500 16.500" fill="none" stroke="#aaa" stroke-width=".7"/><path d="M9.500 2H16.500V10H13.800Q12.500 5.500 9.500 4.500Z" fill="#a6d2f0" stroke="#2a8ad8" stroke-width=".9"/><path d="M1.500 2H16.500V16.500H9L1.500 9.500Z" fill="none" stroke="#333" stroke-width="1.100"/></svg>
<span id="t31" class="tx tr" style="left:89px;top:655.5px;letter-spacing:-0.197px;">Parcel Properties Manager</span>
<div class="hd" style="left:41px;top:675px;width:4px"></div>
<div class="ex" style="left:31px;top:671px"><i></i><b></b></div>
<svg class="a" style="left:46px;top:666px" width="18" height="18" viewBox="0 0 18 18"><path d="M7 8L2.500 17M7.800 8V16.500M9 8L11.500 17" stroke="#2a2a2a" stroke-width="1.400" fill="none"/><path d="M12.500 3V16.500" stroke="#2a2a2a" stroke-width="1.200"/><rect x="2.500" y="3.500" width="8.500" height="4.500" rx=".8" fill="#3a3a3a"/><rect x="1" y="4.500" width="2" height="2.500" fill="#555"/><rect x="5" y="2" width="4" height="2" fill="#3a3a3a"/><path d="M11 2H17L15 5L17 8H11Z" fill="#f4f4f4" stroke="#333" stroke-width=".9"/><circle cx="5.500" cy="5.700" r="1.200" fill="#aaa"/></svg>
<span id="t32" class="tx tr" style="left:70px;top:675.5px;letter-spacing:-0.493px;">Survey</span>
<svg class="a" style="left:7px;top:717px" width="31" height="31" viewBox="0 0 31 31"><defs><linearGradient id="dg" x1="0" y1="1" x2="1" y2="0"><stop offset="0.45" stop-color="#fff"/><stop offset="1" stop-color="#b8bfcc"/></linearGradient></defs><rect x="0.500" y="0.500" width="21" height="27" fill="#fff" stroke="#4a4f5c"/><path d="M3 4.5 H6.500" stroke="#8a8e98"/><path d="M3 7 H6.500" stroke="#8a8e98"/><path d="M3 9.5 H6.500" stroke="#8a8e98"/><path d="M3 12 H6.500" stroke="#8a8e98"/><path d="M3 14.5 H6.500" stroke="#8a8e98"/><path d="M3 17 H6.500" stroke="#8a8e98"/><path d="M3 19.5 H6.500" stroke="#8a8e98"/><path d="M3 22 H6.500" stroke="#8a8e98"/><path d="M3 24.5 H6.500" stroke="#8a8e98"/><rect x="8.500" y="2.500" width="21" height="27" fill="url(#dg)" stroke="#3a3f4c"/><path d="M11 5.5 H16.5" stroke="#555"/><path d="M11 8 H14" stroke="#777"/><path d="M11 10.5 H14.5" stroke="#555"/><path d="M17 10.5 H22" stroke="#555"/><path d="M11 13 H14.5" stroke="#666"/><path d="M17 13 H27" stroke="#888"/><path d="M11 15.5 H14.5" stroke="#666"/><path d="M17 15.5 H27" stroke="#888"/><path d="M11 18 H14.5" stroke="#666"/><path d="M17 18 H27" stroke="#888"/><path d="M11 20.5 H14.5" stroke="#666"/><path d="M17 20.5 H27" stroke="#888"/><path d="M11 23 H14.5" stroke="#666"/><path d="M17 23 H27" stroke="#888"/><path d="M11 25.5 H14.5" stroke="#666"/><path d="M17 25.5 H27" stroke="#888"/></svg>
<span id="t33" class="tx tr" style="left:45px;top:725px;letter-spacing:-0.204px;">Parcel Map Check Report</span>
<div class="a" style="left:262px;top:13px;width:24px;height:780px;background:#5b5b5b"></div>
<div class="a" style="left:262px;top:36px;width:1px;height:362px;background:#474747"></div>
<div class="a" style="left:262px;top:712.500px;width:1px;height:81px;background:#f0f0f0"></div>
<div class="a" style="left:263px;top:36px;width:19px;height:119px;background:#525252;border:1px solid #3a3a3a;border-left:none;border-radius:0 4px 4px 0;"></div><span class="vt" id="vt_Prospector" style="left:267.500px;top:125px;color:#cdcdcd">Prospector</span>
<div class="a" style="left:263px;top:156px;width:19px;height:119px;background:#525252;border:1px solid #3a3a3a;border-left:none;border-radius:0 4px 4px 0;"></div><span class="vt" id="vt_Settings" style="left:267.500px;top:238px;color:#cdcdcd">Settings</span>
<div class="a" style="left:263px;top:276px;width:19px;height:121px;background:#525252;border:1px solid #3a3a3a;border-left:none;border-radius:0 4px 4px 0;"></div><span class="vt" id="vt_Survey" style="left:267.500px;top:355px;color:#a4a4a4">Survey</span>
<div class="a" style="left:263px;top:398px;width:19px;height:120px;background:#5c5c5c;border:1px solid #3a3a3a;border-left:none;border-radius:0 4px 4px 0;"></div><span class="vt" id="vt_Toolbox" style="left:267.500px;top:480px;color:#f4f4f4">Toolbox</span>
<svg class="a" style="left:286px;top:11px" width="596" height="782" viewBox="286 11 596 782">
<rect x="286" y="11" width="596" height="782" fill="#212830"/>
<path d="M401 12.500 L417.500 27 Q436 42 447 57 L536 206" fill="none" stroke="#d020d0" stroke-width="1.300"/>
<path d="M394 9.500L406.400 16" fill="none" stroke="#00ff00" stroke-width="6"/>
<path d="M417.300 26.300Q436 42 447 57L470.500 97" fill="none" stroke="#00ff00" stroke-width="6"/>
<path d="M479 111L489.500 128M497.500 142.500L508 160M515.500 173L536 206" fill="none" stroke="#00ff00" stroke-width="6"/>
<path d="M429.800 35.900A16 16 0 1 1 435.600 62.200" fill="none" stroke="#00ee00" stroke-width="1.800"/>
<path d="M441.100 26V69M435.400 47.200H463" stroke="#00ee00" stroke-width="1.900"/>
<path d="M426.300 34.300L462.600 25" stroke="#f0e428" stroke-width="1.500"/>
<path d="M468 23.600L478.900 20.900M484.800 19.300L497 16.200M503 14.700L515 11.700" stroke="#f0e428" stroke-width="1.500"/>
<path d="M466.200 10.900Q474.500 16 481.600 28.600" fill="none" stroke="#a8c458" stroke-width="1.200"/>
<path d="M590 10L477 39L577 205" fill="none" stroke="#f01010" stroke-width="1.500" stroke-dasharray="9 5"/>
<path d="M491 44L509.600 75M518 90L537 121M545 136L564 166M569 180L583 204" stroke="#a8c458" stroke-width="1.200"/>
<path d="M580 193L587 205" stroke="#a8c458" stroke-width="1.200"/>
<path d="M624.500 96L597 55.500L670.400 8.200L739.500 111.500L664.600 160L650 139" fill="none" stroke="#00d000" stroke-width="1.400"/>
<path d="M679 11Q701 60 756 118.500" fill="none" stroke="#f01010" stroke-width="1.500" stroke-dasharray="9 5"/>
<path d="M756 118.500L690 204" fill="none" stroke="#f01010" stroke-width="1.500" stroke-dasharray="9 5"/>
<path d="M736 200L784 141L882 199" fill="none" stroke="#f01010" stroke-width="1.500" stroke-dasharray="9 5"/>
<path d="M712 203L758 146" stroke="#f0e428" stroke-width="1.500"/>
<path d="M763 139L767.500 133M771.200 126L775.300 120.700M778.400 117.600L785.600 109.400M789.800 104.200L802 88.700" stroke="#f0e428" stroke-width="1.500"/>
<path d="M774.500 35.500Q790 58 813 74Q835 90 855 102" fill="none" stroke="#f0e428" stroke-width="1.500"/>
<path d="M759 11.500L762 15.500M765 20.500L771.500 30M860 105L870 111.500M874.500 113.500L879.500 117.500" stroke="#f0e428" stroke-width="1.500"/>
<path d="M812.500 74L813.500 77.500" stroke="#f0e428" stroke-width="1.200"/>
<path d="M813 10L825 26M838.600 37.700L852 48M867.700 58L882 67M875 10L882 14" stroke="#f0e428" stroke-width="1.500"/>
<text x="289" y="29" font-family="Liberation Sans, sans-serif" font-size="12" fill="#f0f0f0" textLength="123">[−][Top][2D Wireframe]</text>
<text transform="translate(408.800,43.300) rotate(43)" font-family="Liberation Sans, sans-serif" font-size="15" fill="#f0f0f0">11.26'</text>
<text transform="translate(442,104) rotate(61)" font-family="Liberation Sans, sans-serif" font-size="23" fill="#12c4d8" textLength="108" lengthAdjust="spacing">N30°51'11"</text>
<text transform="translate(496,180) rotate(61)" font-family="Liberation Sans, sans-serif" font-size="14" fill="#f0f0f0">180.14</text>
<text transform="translate(649,101) rotate(-33)" font-family="Liberation Sans, sans-serif" font-size="21" font-weight="bold" font-style="italic" fill="#10f010" stroke="#10f010" stroke-width=".700">50x70</text>
<text x="610" y="113.500" font-family="Liberation Sans, sans-serif" font-size="21" fill="#e4e4e4" textLength="40">A–2</text>
<text x="584" y="137.500" font-family="Liberation Sans, sans-serif" font-size="21" fill="#8a8a8a" textLength="90">23234 Sf</text>
<text transform="translate(744,15) rotate(56)" font-family="Liberation Sans, sans-serif" font-size="14" fill="#f0f0f0">81.43'</text>
<text transform="translate(800,85) rotate(30)" font-family="Liberation Sans, sans-serif" font-size="14" fill="#f0f0f0">13.57'</text>
<text transform="translate(726,214) rotate(-52)" font-family="Liberation Sans, sans-serif" font-size="15" fill="#f0f0f0">5.78'</text>
<text transform="translate(875,298) rotate(-70)" font-family="Liberation Sans, sans-serif" font-size="14" fill="#f0f0f0">50 W</text>
<text transform="translate(877,333) rotate(-70)" font-family="Liberation Sans, sans-serif" font-size="14" fill="#f0f0f0">182</text>
<path d="M872 345L882 330" stroke="#f0e428" stroke-width="1.500"/>
<path d="M872 380L882 364M874 455.500L882 460.500" stroke="#f01010" stroke-width="1.400"/>
<path d="M871.500 496.500L875 499" stroke="#d020d0" stroke-width="1.300"/>
<path d="M874.500 498L883 505" stroke="#00ff00" stroke-width="5"/>
<path d="M873 514L875.500 506.500M874.500 515L878 508" stroke="#e8e8e8" stroke-width="1"/>
<path d="M877 513.500H882M881 508V518" stroke="#00e000" stroke-width="1.600"/>
<rect x="872" y="443" width="1.500" height="2" fill="#b8c860"/>
<path d="M306.500 779V793M301 786.500H310.500V793M301.500 786.500V793M310 790.500H356" fill="none" stroke="#e0e0e0" stroke-width="1"/>
<path d="M361 779L373 790.500M373 779L361 790.500" stroke="#e0e0e0" stroke-width="1.100"/>
</svg>
<div class="a" style="left:283px;top:13px;width:3px;height:780px;background:#5a5a5a"></div>
<div class="a" style="left:666px;top:778px;width:22px;height:15px;background:#4a4a4a"></div>
<div class="a" style="left:688px;top:705px;width:194px;height:88px;background:#acacac;overflow:hidden;font-family:'Liberation Mono',monospace;font-size:11.700px;color:#111;line-height:1"><span class="a" id="cm1" style="left:2.500px;top:7.500px;white-space:nowrap">Command: Save to files &lt;C:\civil3d\reports&gt;:</span><span class="a" id="cm2" style="left:2.500px;top:38px;white-space:nowrap">Command: Select parcel by area</span><span class="a" id="cm3" style="left:3px;top:67.500px;white-space:nowrap">Command: ReportParcelMapCheck</span><div class="a" style="left:0;top:83px;width:194px;height:5px;background:#c6c6c6"></div><div class="a" style="left:6px;top:86px;width:10px;height:2px;background:#888"></div></div>
<div class="a" style="left:872px;top:705px;width:10px;height:88px;background:linear-gradient(90deg,rgba(0,0,0,.42),rgba(0,0,0,.04))"></div>
<div class="a" style="left:688px;top:779px;width:184px;height:9px;background:linear-gradient(180deg,rgba(0,0,0,.40),rgba(0,0,0,0))"></div>
<div class="a" style="left:298px;top:204px;width:574px;height:575px;background:#f0f0f0;border:1px solid #1c99a1;box-sizing:border-box;box-shadow:none"></div>
<div class="a" style="left:299px;top:205px;width:572px;height:30px;background:#fff"></div>
<span id="t34" class="tx tr" style="left:307.5px;top:219.7px;letter-spacing:-0.191px;">Create Reports - Parcel Mapcheck Report</span>
<div class="a" style="left:751px;top:219px;width:10px;height:1px;background:#c4c4c4"></div>
<div class="a" style="left:797px;top:214px;width:8px;height:8px;border:1px solid #111"></div>
<svg class="a" style="left:842px;top:213px" width="12" height="12"><path d="M0.700 0.700L10.300 10.300M10.300 0.700L0.700 10.300" stroke="#111" stroke-width="1.200"/></svg>
<div class="gb" style="left:311px;top:253px;width:548px;height:91px"></div>
<span id="t35" class="tx dl lg" style="left:318px;top:253.7px;letter-spacing:-0.144px;">Parcel mapcheck report</span>
<span id="t36" class="tx dl" style="left:320px;top:272.9px;letter-spacing:0.097px;">Parcel mapcheck reports are available for parcels. Reports display the directions and distances, start and</span>
<span id="t37" class="tx dl" style="left:320px;top:285.6px;letter-spacing:0.019px;">end coordinates, curve data for each segment starting at a specified Point of Beginning (POB), the</span>
<span id="t38" class="tx dl" style="left:320px;top:298.1px;letter-spacing:0.043px;">perimeter and area, and an error of closure that is reported as distance, direction, northing, easting and</span>
<span id="t39" class="tx dl" style="left:320px;top:309.6px;letter-spacing:0.092px;">precision.</span>
<div class="gb" style="left:311px;top:357px;width:548px;height:135px"></div>
<span id="t40" class="tx dl lg" style="left:318px;top:357.9px;letter-spacing:-0.084px;">List of objects</span>
<div class="btn" style="left:667px;top:367px;width:88px;height:21px;"></div>
<span id="t41" class="tx dl" style="left:686.8px;top:376.6px;letter-spacing:0.175px;">Select All</span>
<div class="btn" style="left:763px;top:367px;width:88px;height:21px;"></div>
<span id="t42" class="tx dl" style="left:778.2px;top:376.6px;letter-spacing:0.168px;">Deselect All</span>
<div class="a" style="left:317px;top:395px;width:536px;height:92px;background:#fff;border:1px solid #828790;box-sizing:border-box"></div>
<div class="a" style="left:369px;top:397px;width:1px;height:24px;background:#e5e5e5"></div>
<div class="a" style="left:369px;top:421px;width:1px;height:65px;background:#f0f0f0"></div>
<div class="a" style="left:469px;top:397px;width:1px;height:24px;background:#e5e5e5"></div>
<div class="a" style="left:469px;top:421px;width:1px;height:65px;background:#f0f0f0"></div>
<div class="a" style="left:519px;top:397px;width:1px;height:24px;background:#e5e5e5"></div>
<div class="a" style="left:519px;top:421px;width:1px;height:65px;background:#f0f0f0"></div>
<div class="a" style="left:599px;top:397px;width:1px;height:24px;background:#e5e5e5"></div>
<div class="a" style="left:599px;top:421px;width:1px;height:65px;background:#f0f0f0"></div>
<div class="a" style="left:679px;top:397px;width:1px;height:24px;background:#e5e5e5"></div>
<div class="a" style="left:679px;top:421px;width:1px;height:65px;background:#f0f0f0"></div>
<div class="a" style="left:759px;top:397px;width:1px;height:24px;background:#e5e5e5"></div>
<div class="a" style="left:759px;top:421px;width:1px;height:65px;background:#f0f0f0"></div>
<div class="a" style="left:318px;top:437px;width:517px;height:1px;background:#f0f0f0"></div>
<div class="a" style="left:318px;top:454px;width:517px;height:1px;background:#f0f0f0"></div>
<div class="a" style="left:318px;top:471px;width:517px;height:1px;background:#f0f0f0"></div>
<span id="t43" class="tx dl" style="left:325.5px;top:408.8px;letter-spacing:-0.212px;">Include</span>
<span id="t44" class="tx dl" style="left:375.3px;top:408.8px;letter-spacing:-0.561px;">Name</span>
<span id="t45" class="tx dl" style="left:476px;top:408.8px;letter-spacing:-0.587px;">Number</span>
<span id="t46" class="tx dl" style="left:525.3px;top:408.8px;letter-spacing:-0.294px;">Description</span>
<span id="t47" class="tx dl" style="left:605.5px;top:408.8px;letter-spacing:-0.737px;">Area</span>
<span id="t48" class="tx dl" style="left:685.5px;top:408.8px;letter-spacing:-0.521px;">Perimeter</span>
<div class="a" style="left:318px;top:421px;width:517px;height:65px;overflow:hidden">
<div class="cb" style="left:5px;top:2px"><svg width="11" height="11" style="display:block"><path d="M1.500 5.500L4.500 8.500L10 2" fill="none" stroke="#222" stroke-width="1.100"/></svg></div>
<span id="t49" class="tx dl" style="left:56.8px;top:9.3px;letter-spacing:-0.242px;">Overall Site-133</span>
<span id="t50" class="tx dl" style="left:158px;top:9.3px;letter-spacing:-0.453px;">133</span>
<span id="t51" class="tx dl" style="left:287.5px;top:9.3px;letter-spacing:-0.173px;">10,306.26S...</span>
<span id="t52" class="tx dl" style="left:367.5px;top:9.3px;letter-spacing:-0.197px;">428.475'</span>
<div class="cb" style="left:5px;top:19px"><svg width="11" height="11" style="display:block"><path d="M1.500 5.500L4.500 8.500L10 2" fill="none" stroke="#222" stroke-width="1.100"/></svg></div>
<span id="t53" class="tx dl" style="left:56.8px;top:26px;letter-spacing:-0.242px;">Overall Site-134</span>
<span id="t54" class="tx dl" style="left:158px;top:26px;letter-spacing:-0.453px;">134</span>
<span id="t55" class="tx dl" style="left:287.5px;top:26px;letter-spacing:-0.157px;">9,669.31Sq....</span>
<span id="t56" class="tx dl" style="left:367.5px;top:26px;letter-spacing:-0.197px;">396.222'</span>
<div class="cb" style="left:5px;top:36px"><svg width="11" height="11" style="display:block"><path d="M1.500 5.500L4.500 8.500L10 2" fill="none" stroke="#222" stroke-width="1.100"/></svg></div>
<span id="t57" class="tx dl" style="left:56.8px;top:42.7px;letter-spacing:-0.242px;">Overall Site-135</span>
<span id="t58" class="tx dl" style="left:158px;top:42.7px;letter-spacing:-0.453px;">135</span>
<span id="t59" class="tx dl" style="left:287.5px;top:42.7px;letter-spacing:-0.157px;">8,288.44Sq....</span>
<span id="t60" class="tx dl" style="left:367.5px;top:42.7px;letter-spacing:-0.197px;">416.062'</span>
<div class="cb" style="left:5px;top:53px"><svg width="11" height="11" style="display:block"><path d="M1.500 5.500L4.500 8.500L10 2" fill="none" stroke="#222" stroke-width="1.100"/></svg></div>
<span id="t61" class="tx dl" style="left:56.8px;top:59.4px;letter-spacing:-0.242px;">Overall Site-136</span>
<span id="t62" class="tx dl" style="left:158px;top:59.4px;letter-spacing:-0.453px;">136</span>
<span id="t63" class="tx dl" style="left:287.5px;top:59.4px;letter-spacing:-0.157px;">8,246.72Sq....</span>
<span id="t64" class="tx dl" style="left:367.5px;top:59.4px;letter-spacing:-0.197px;">392.792'</span>
</div>
<div class="a" style="left:835px;top:396px;width:17px;height:90px;background:#f0f0f0"></div>
<div class="a" style="left:835.500px;top:414px;width:15px;height:17px;background:#cdcdcd"></div>
<svg class="a" style="left:838.5px;top:402px" width="9" height="8"><path d="M1 6 L4.5 1.5 L8 6" fill="none" stroke="#505050" stroke-width="1.800"/></svg>
<svg class="a" style="left:838.5px;top:473px" width="9" height="8"><path d="M1 1.5 L4.5 6 L8 1.5" fill="none" stroke="#505050" stroke-width="1.800"/></svg>
<div class="gb" style="left:311px;top:505px;width:265px;height:152px"></div>
<span id="t65" class="tx dl lg" style="left:318.4px;top:505.9px;letter-spacing:-0.446px;">Analysis</span>
<span id="t66" class="tx dl" style="left:319.5px;top:521.8px;letter-spacing:-0.050px;">Point of beginning:</span>
<span id="t67" class="tx dl" style="left:322px;top:541.7px;letter-spacing:-0.203px;">X:</span>
<span id="t68" class="tx dl" style="left:437.5px;top:541.7px;letter-spacing:0.102px;">Y:</span>
<div class="a" style="left:323px;top:548px;width:102px;height:20px;box-sizing:border-box;border:1px solid #7a7a7a;border-right-color:#8a8a8a;border-bottom-color:#8a8a8a;box-shadow:inset -1px -1px 0 #fff, inset 1px 1px 0 #c8c8c8;background:#f0f0f0"></div>
<div class="a" style="left:438px;top:548px;width:98px;height:20px;box-sizing:border-box;border:1px solid #7a7a7a;border-right-color:#8a8a8a;border-bottom-color:#8a8a8a;box-shadow:inset -1px -1px 0 #fff, inset 1px 1px 0 #c8c8c8;background:#f0f0f0"></div>
<span id="t69" class="tx dl" style="left:326.4px;top:557.9px;letter-spacing:-0.166px;">0.000</span>
<span id="t70" class="tx dl" style="left:441.4px;top:557.9px;letter-spacing:-0.166px;">0.000</span>
<div class="cb" style="left:317px;top:586px;border-color:#bcbcbc"></div>
<span id="t71" class="tx dl dis" style="left:334.6px;top:591.9px;letter-spacing:0.102px;text-shadow:1px 1px 0 #fff">Process segment order counterclockwise</span>
<div class="cb" style="left:317px;top:627px;border-color:#bcbcbc"></div>
<span id="t72" class="tx dl dis" style="left:334.6px;top:632.9px;letter-spacing:0.048px;text-shadow:1px 1px 0 #fff">Enable mapcheck across chord</span>
<div class="gb" style="left:586px;top:505px;width:273px;height:152px"></div>
<span id="t73" class="tx dl lg" style="left:593.4px;top:505.9px;letter-spacing:-0.319px;">Settings</span>
<span id="t74" class="tx dl" style="left:597.2px;top:524.8px;letter-spacing:0.094px;">Value</span>
<span id="t75" class="tx dl" style="left:701.3px;top:524.8px;letter-spacing:0.083px;">Precision</span>
<span id="t76" class="tx dl" style="left:779px;top:524.8px;letter-spacing:0.026px;">Format</span>
<span id="t77" class="tx dl" style="left:597.2px;top:542px;letter-spacing:0.049px;">Distance:</span>
<span id="t78" class="tx dl" style="left:701.3px;top:542px;">3</span>
<span id="t79" class="tx dl" style="left:597.2px;top:558.9px;letter-spacing:0.073px;">Direction:</span>
<span id="t80" class="tx dl" style="left:701.3px;top:558.9px;">6</span>
<span id="t81" class="tx dl" style="left:779px;top:558.9px;letter-spacing:-0.150px;">DD° MM' SS</span>
<span id="t82" class="tx dl" style="left:597.2px;top:576px;letter-spacing:-0.179px;">Area:</span>
<span id="t83" class="tx dl" style="left:701.3px;top:576px;">2</span>
<span id="t84" class="tx dl" style="left:597.2px;top:592.9px;letter-spacing:0.044px;">Error of closure:</span>
<span id="t85" class="tx dl" style="left:701.3px;top:592.9px;">4</span>
<span id="t86" class="tx dl" style="left:597.2px;top:626.8px;letter-spacing:0.103px;">Precision and</span>
<span id="t87" class="tx dl" style="left:701.3px;top:626.8px;">3</span>
<span id="t88" class="tx dl" style="left:597.2px;top:639px;letter-spacing:0.025px;">Perimeter:</span>
<div class="gb" style="left:311px;top:670px;width:548px;height:52px"></div>
<span id="t89" class="tx dl lg" style="left:318.3px;top:670.8px;letter-spacing:-0.266px;">Report settings</span>
<span id="t90" class="tx dl" style="left:319.6px;top:687px;letter-spacing:-0.104px;">Save report to:</span>
<div class="a" style="left:321px;top:696px;width:503px;height:20px;box-sizing:border-box;border:1px solid #7a7a7a;border-right-color:#8a8a8a;border-bottom-color:#8a8a8a;box-shadow:inset -1px -1px 0 #fff, inset 1px 1px 0 #c8c8c8;background:#f0f0f0"></div>
<span id="t91" class="tx dl" style="left:323.6px;top:706px;letter-spacing:-0.015px;">C:\Users\chadwic\Documents\CivilReport.DOC</span>
<div class="btn" style="left:831px;top:695px;width:21px;height:21px;background:#e1e1e1"><svg width="19" height="19" style="display:block"><path d="M3 5.500L8 4L10 6.500H15.500V14.500H3Z" fill="#e8b830" stroke="#b08a20" stroke-width=".8"/><path d="M4 14.500L6.500 7.500L17 5L14.500 13Z" fill="#fbe9a0" stroke="#c8a030" stroke-width=".8"/><path d="M14.500 9Q9 9.500 11 13.500M11 13.500L9.500 11.500M11 13.500L13.500 13" fill="none" stroke="#1c3c8c" stroke-width="1.400"/></svg></div>
<div class="btn" style="left:573px;top:738px;width:123px;height:21px;border:2px solid #0078d7"></div>
<span id="t92" class="tx dl" style="left:600px;top:748px;letter-spacing:0.031px;">Create Report</span>
<div class="btn" style="left:704px;top:738px;width:73px;height:21px;"></div>
<span id="t93" class="tx dl" style="left:728px;top:748px;letter-spacing:-0.074px;">Done</span>
<div class="btn" style="left:785px;top:738px;width:73px;height:21px;"></div>
<span id="t94" class="tx dl" style="left:810.5px;top:748px;letter-spacing:-0.031px;">Help</span>
<svg class="a" style="left:298px;top:670px;pointer-events:none" width="310" height="70" viewBox="298 670 310 70"><path d="M390.2 679.5 C382.7 680.1 357.1 682.4 345.4 683.1 C333.7 683.9 326.2 683.7 320.0 684.0 C313.8 684.3 310.8 684.1 308.0 685.0 C305.2 685.9 304.0 687.2 303.3 689.5 C302.6 691.8 302.8 694.7 303.6 698.6 C304.4 702.5 307.1 708.9 308.2 713.0 C309.3 717.1 309.9 721.3 310.3 723.0" fill="none" stroke="#1212e6" stroke-width="2" stroke-linejoin="round" stroke-linecap="round"/><path d="M310.3 723 C312.5 722.4 316.2 720.4 323.6 719.4 C331.0 718.4 343.8 717.2 354.4 716.7 C365.0 716.2 377.9 716.2 387.0 716.7 C396.1 717.2 402.2 718.4 408.9 719.4 C415.6 720.4 421.2 721.8 427.0 723.0 C432.8 724.2 437.9 726.1 443.4 726.7 C448.9 727.3 456.0 727.0 460.0 726.7 C464.0 726.4 462.1 725.4 467.2 724.9 C472.3 724.4 483.2 723.9 490.8 724.0 C498.4 724.1 506.0 725.6 512.6 725.8 C519.2 725.9 524.7 725.8 530.7 724.9 C536.8 724.0 542.9 721.7 548.9 720.3 C554.9 718.9 561.2 717.7 567.0 716.7 C572.8 715.7 580.1 715.4 583.4 714.5 C586.7 713.6 585.7 714.3 586.6 711.3 C587.5 708.3 588.6 700.0 588.8 696.7 C589.0 693.5 588.0 692.6 587.9 691.8" fill="none" stroke="#1212e6" stroke-width="2" stroke-linejoin="round" stroke-linecap="round"/><path d="M587.9 691.8 C584.4 691.4 573.5 690.2 567.0 689.5 C560.5 688.8 554.9 688.1 548.9 687.7 C542.9 687.3 534.9 687.8 530.7 687.3 C526.5 686.8 526.5 685.6 523.5 685.0 C520.5 684.4 519.0 683.5 512.6 683.5 C506.2 683.5 494.5 684.2 485.4 685.0 C476.3 685.8 464.7 687.7 458.0 688.2 C451.3 688.7 450.4 688.4 445.2 688.2 C440.0 688.0 433.1 687.8 427.0 686.8 C420.9 685.8 415.0 683.4 408.9 682.2 C402.8 681.0 393.3 680.0 390.2 679.5" fill="none" stroke="#1212e6" stroke-width="2" stroke-linejoin="round" stroke-linecap="round"/></svg>
</div>
</body></html>
